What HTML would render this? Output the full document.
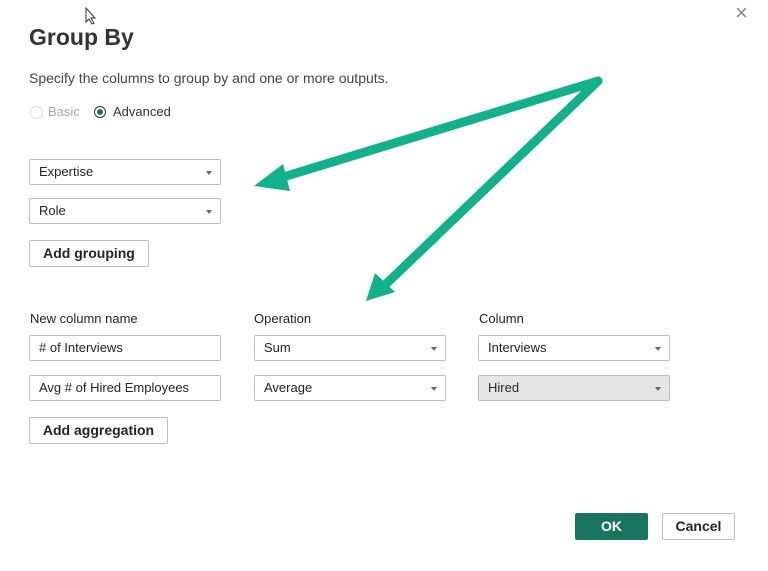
<!DOCTYPE html>
<html><head><style>
body{margin:0;width:768px;height:571px;background:#fff;font-family:"Liberation Sans",sans-serif;color:#252423;position:relative;overflow:hidden}
.a{position:absolute}
.in{position:absolute;width:190px;height:26px;border:1px solid #bdbdbd;border-radius:2px;box-sizing:border-box;font-size:13px;line-height:24px;padding-left:9px;background:#fff}
.dd::after{content:"";position:absolute;right:8px;top:11px;border-left:3px solid transparent;border-right:3px solid transparent;border-top:4px solid #666}
.btn{position:absolute;height:27px;border:1px solid #bdbdbd;border-radius:2px;box-sizing:border-box;font-size:14px;font-weight:bold;line-height:25px;text-align:center;background:#fff}
.lbl{position:absolute;font-size:13px;top:311px}
</style></head><body>
<div class="a" style="left:29px;top:24px;font-size:23px;font-weight:bold;color:#333">Group By</div>
<div class="a" style="left:735px;top:0px;font-size:22px;color:#888;font-weight:300">×</div>
<div class="a" style="left:29px;top:70px;font-size:14px;color:#444">Specify the columns to group by and one or more outputs.</div>
<div class="a" style="left:30px;top:106px;width:11px;height:11px;border:1px solid #ddd;border-radius:50%"></div>
<div class="a" style="left:48px;top:104px;font-size:13px;color:#aaa">Basic</div>
<div class="a" style="left:94px;top:106px;width:10px;height:10px;border:1px solid #333;border-radius:50%"></div>
<div class="a" style="left:97px;top:109px;width:6px;height:6px;background:#11755f;border-radius:50%"></div>
<div class="a" style="left:113px;top:104px;font-size:13px;color:#333">Advanced</div>
<div class="in dd" style="left:29px;top:159px;width:192px">Expertise</div>
<div class="in dd" style="left:29px;top:198px;width:192px">Role</div>
<div class="btn" style="left:29px;top:240px;width:120px">Add grouping</div>
<div class="lbl" style="left:30px">New column name</div>
<div class="lbl" style="left:254px">Operation</div>
<div class="lbl" style="left:479px">Column</div>
<div class="in" style="left:29px;top:335px;width:192px"># of Interviews</div>
<div class="in dd" style="left:254px;top:335px;width:192px">Sum</div>
<div class="in dd" style="left:478px;top:335px;width:192px">Interviews</div>
<div class="in" style="left:29px;top:375px;width:192px">Avg # of Hired Employees</div>
<div class="in dd" style="left:254px;top:375px;width:192px">Average</div>
<div class="in dd" style="left:478px;top:375px;width:192px;background:#e6e6e6">Hired</div>
<div class="btn" style="left:29px;top:417px;width:139px">Add aggregation</div>
<div class="btn" style="left:575px;top:513px;width:73px;background:#1a7560;border-color:#1a7560;color:#fff">OK</div>
<div class="btn" style="left:662px;top:513px;width:73px">Cancel</div>
<svg class="a" style="left:0;top:0" width="768" height="571">
<path d="M86 8 L86 22 L89 19 L92 24 L94 23 L91 18 L95 18 Z" fill="#fff" stroke="#333" stroke-width="1"/>
<g stroke="#12b08c" stroke-width="9" stroke-linecap="round" fill="none">
<line x1="598" y1="81" x2="280" y2="178"/>
<line x1="598" y1="81" x2="385" y2="285"/>
</g>
<polygon points="254,186 283,164 290,191" fill="#12b08c"/>
<polygon points="366,301 375,273 395,292" fill="#12b08c"/>
</svg>
</body></html>
